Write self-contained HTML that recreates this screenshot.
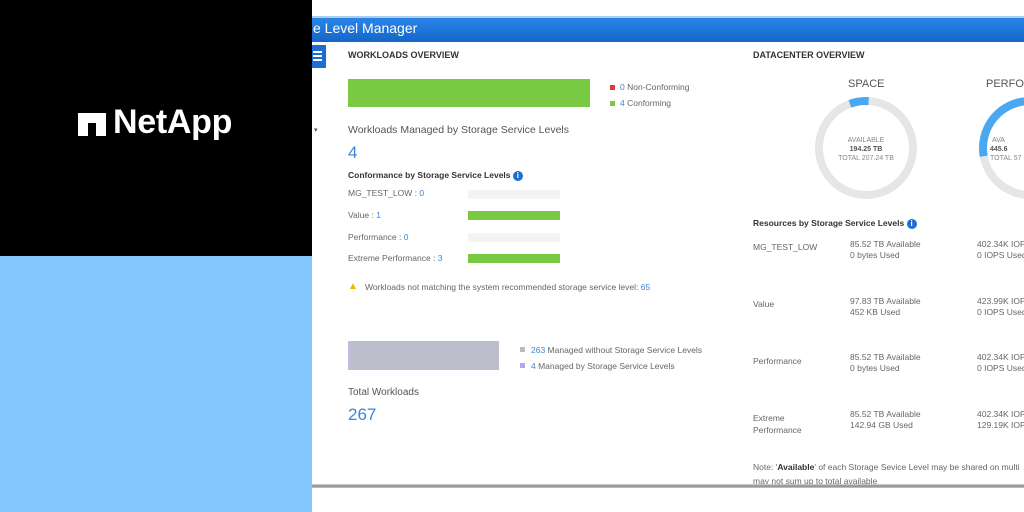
<!DOCTYPE html>
<html><head><meta charset="utf-8"><style>
body{margin:0;width:1024px;height:512px;position:relative;overflow:hidden;background:#fff;font-family:"Liberation Sans",sans-serif;color:#555}
.a{position:absolute;white-space:nowrap}
.s{font-size:8.5px;color:#666}
.b{color:#3a86d8}
.h{font-size:9px;font-weight:bold;color:#333}
.bar{position:absolute;background:#7ac943}
.e{position:absolute;background:#f4f4f4}
</style></head><body>
<div class="a" style="left:0;top:0;width:312px;height:256px;background:#000"></div>
<div class="a" style="left:0;top:256px;width:312px;height:256px;background:#82c8fd"></div>
<svg class="a" style="left:78px;top:113px" width="28" height="23" viewBox="0 0 28 23"><path d="M0 0H28V23H18V10H10V23H0Z" fill="#fff"/></svg>
<div class="a" style="left:113px;top:103px;font-size:34px;font-weight:bold;color:#fff;letter-spacing:-0.3px">NetApp</div>

<div class="a" style="left:312px;top:16px;width:712px;height:2px;background:#aacdf0"></div>
<div class="a" style="left:312px;top:18px;width:712px;height:24px;background:linear-gradient(#2a85e8,#1565c8)"></div>
<div class="a" style="left:313px;top:20px;font-size:14px;color:#fff">e Level Manager</div>
<div class="a" style="left:312px;top:45px;width:14px;height:23px;background:#1a6fd0"></div>
<div class="a" style="left:313px;top:51px;width:9px;height:2px;background:#fff;box-shadow:0 4px 0 #fff,0 8px 0 #fff"></div>
<div class="a" style="left:314px;top:126px;font-size:7px;color:#555">▾</div>

<div class="a h" style="left:348px;top:50px">WORKLOADS OVERVIEW</div>
<div class="bar" style="left:348px;top:79px;width:242px;height:28px"></div>
<div class="a" style="left:610px;top:85px;width:5px;height:5px;background:#e03a3a"></div>
<div class="a s" style="left:620px;top:82px"><span class="b">0</span> Non-Conforming</div>
<div class="a" style="left:610px;top:101px;width:5px;height:5px;background:#7ac943"></div>
<div class="a s" style="left:620px;top:98px"><span class="b">4</span> Conforming</div>
<div class="a" style="left:348px;top:124px;font-size:10.5px;color:#555">Workloads Managed by Storage Service Levels</div>
<div class="a b" style="left:348px;top:143px;font-size:17px">4</div>
<div class="a" style="left:348px;top:170px;font-size:8.5px;font-weight:bold;color:#333">Conformance by Storage Service Levels <span style="display:inline-block;width:10px;height:10px;border-radius:5px;background:#1a6fd0;color:#fff;font-size:8px;text-align:center;line-height:10px">i</span></div>
<div class="a s" style="left:348px;top:188px">MG_TEST_LOW : <span class="b">0</span></div>
<div class="e" style="left:468px;top:190px;width:92px;height:9px"></div>
<div class="a s" style="left:348px;top:210px">Value : <span class="b">1</span></div>
<div class="bar" style="left:468px;top:211px;width:92px;height:9px"></div>
<div class="a s" style="left:348px;top:232px">Performance : <span class="b">0</span></div>
<div class="e" style="left:468px;top:233px;width:92px;height:9px"></div>
<div class="a s" style="left:348px;top:253px">Extreme Performance : <span class="b">3</span></div>
<div class="bar" style="left:468px;top:254px;width:92px;height:9px"></div>
<div class="a" style="left:348px;top:281px;font-size:10px;color:#f0b400">▲</div>
<div class="a s" style="left:365px;top:282px">Workloads not matching the system recommended storage service level: <span class="b">65</span></div>
<div class="a" style="left:348px;top:341px;width:149px;height:29px;background:#bcbfcb;border-left:2px solid #c6b8f0"></div>
<div class="a" style="left:520px;top:347px;width:5px;height:5px;background:#bbb"></div>
<div class="a s" style="left:531px;top:345px"><span class="b">263</span> Managed without Storage Service Levels</div>
<div class="a" style="left:520px;top:363px;width:5px;height:5px;background:#b8a4ee"></div>
<div class="a s" style="left:531px;top:361px"><span class="b">4</span> Managed by Storage Service Levels</div>
<div class="a" style="left:348px;top:387px;font-size:10px;color:#555">Total Workloads</div>
<div class="a b" style="left:348px;top:405px;font-size:17px">267</div>

<div class="a h" style="left:753px;top:50px">DATACENTER OVERVIEW</div>
<div class="a" style="left:848px;top:78px;font-size:11px;color:#555">SPACE</div>
<div class="a" style="left:986px;top:78px;font-size:11px;color:#555">PERFOR</div>
<svg class="a" style="left:810px;top:92px" width="214" height="112">
<circle cx="56" cy="56" r="47" fill="none" stroke="#e6e6e6" stroke-width="8"/>
<circle cx="56" cy="56" r="47" fill="none" stroke="#4aa8f0" stroke-width="8" stroke-dasharray="19 300" transform="rotate(-110 56 56)"/>
<circle cx="220" cy="56" r="47" fill="none" stroke="#e6e6e6" stroke-width="8"/>
<circle cx="220" cy="56" r="47" fill="none" stroke="#4aa8f0" stroke-width="8" stroke-dasharray="85 300" transform="rotate(-190 220 56)"/>
</svg>
<div class="a" style="left:816px;top:136px;width:100px;text-align:center;font-size:7px;color:#888;line-height:9px">AVAILABLE<br><b style="color:#555">194.25 TB</b><br>TOTAL 207.24 TB</div>
<div class="a" style="left:990px;top:136px;font-size:7px;color:#888;line-height:9px">&nbsp;AVA<br><b style="color:#555">445.6</b><br>TOTAL 57</div>
<div class="a" style="left:753px;top:218px;font-size:8.5px;font-weight:bold;color:#333">Resources by Storage Service Levels <span style="display:inline-block;width:10px;height:10px;border-radius:5px;background:#1a6fd0;color:#fff;font-size:8px;text-align:center;line-height:10px">i</span></div>
<div class="a s" style="left:753px;top:242px">MG_TEST_LOW</div>
<div class="a s" style="left:850px;top:239px;line-height:11px">85.52 TB Available<br>0 bytes Used</div>
<div class="a s" style="left:977px;top:239px;line-height:11px">402.34K IOPS<br>0 IOPS Used</div>
<div class="a s" style="left:753px;top:299px">Value</div>
<div class="a s" style="left:850px;top:296px;line-height:11px">97.83 TB Available<br>452 KB Used</div>
<div class="a s" style="left:977px;top:296px;line-height:11px">423.99K IOPS<br>0 IOPS Used</div>
<div class="a s" style="left:753px;top:356px">Performance</div>
<div class="a s" style="left:850px;top:352px;line-height:11px">85.52 TB Available<br>0 bytes Used</div>
<div class="a s" style="left:977px;top:352px;line-height:11px">402.34K IOPS<br>0 IOPS Used</div>
<div class="a s" style="left:753px;top:412px;line-height:12px">Extreme<br>Performance</div>
<div class="a s" style="left:850px;top:409px;line-height:11px">85.52 TB Available<br>142.94 GB Used</div>
<div class="a s" style="left:977px;top:409px;line-height:11px">402.34K IOPS<br>129.19K IOPS</div>
<div class="a s" style="left:753px;top:460px;line-height:14px">Note: '<b style="color:#333">Available</b>' of each Storage Sevice Level may be shared on multi<br>may not sum up to total available</div>
<div class="a" style="left:312px;top:484px;width:712px;height:4px;background:linear-gradient(#ddd,#888,#ccc)"></div>
</body></html>
